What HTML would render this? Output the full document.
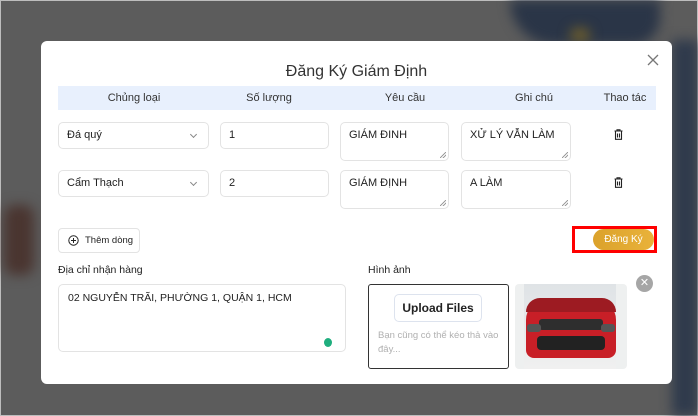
<!DOCTYPE html>
<html><head><meta charset="utf-8"><style>
*{box-sizing:border-box;margin:0;padding:0}
body{width:698px;height:416px;overflow:hidden;background:#5c5c5c;font-family:"Liberation Sans","Noto Sans CJK SC",sans-serif;position:relative;color:#222}
.frame{position:absolute;left:0;top:0;width:698px;height:416px;border:1px solid #bdbdbd}
.blob{position:absolute;background:#2a3547;filter:blur(6px)}
.modal{position:absolute;left:41px;top:41px;width:631px;height:343px;background:#fff;border-radius:6px}
.abs{position:absolute}
.title{left:0;width:100%;top:22px;text-align:center;font-size:16px;color:#333}
.head{left:17px;top:45px;width:598px;height:24px;background:#e8f0fd;font-size:11px;color:#333}
.head span{position:absolute;top:6px;transform:translateX(-50%);white-space:nowrap}
.inp{position:absolute;border:1px solid #e3e3e3;border-radius:5px;font-size:11px;color:#222;padding:6px 8px}
.grip{position:absolute;right:2px;bottom:2px;width:6px;height:6px;background:linear-gradient(135deg,transparent 45%,#999 46%,#999 55%,transparent 56%,transparent 70%,#999 71%,#999 80%,transparent 81%)}
.chev{position:absolute;right:12px;top:9px;width:5px;height:5px;border-right:1px solid #888;border-bottom:1px solid #888;transform:rotate(45deg)}
</style></head><body>
<div class="frame"></div>
<div class="blob" style="left:510px;top:0;width:150px;height:45px;border-radius:0 0 30px 50px"></div>
<div class="blob" style="left:672px;top:40px;width:26px;height:376px;background:#2f3a4c"></div>
<div class="blob" style="left:570px;top:28px;width:20px;height:14px;background:#6e5e2c;border-radius:8px"></div>
<div class="blob" style="left:4px;top:205px;width:30px;height:70px;background:#4a3530;border-radius:10px"></div>
<div class="modal">
 <div class="abs title">Đăng Ký Giám Định</div>
 <svg class="abs" style="left:606px;top:13px" width="12" height="12" viewBox="0 0 12 12"><path d="M1 1L11 11M11 1L1 11" stroke="#777" stroke-width="1.3"/></svg>
 <div class="abs head"><span style="left:76px">Chủng loại</span><span style="left:211px">Số lượng</span><span style="left:347px">Yêu cầu</span><span style="left:476px">Ghi chú</span><span style="left:567px">Thao tác</span></div>

 <div class="inp" style="left:17px;top:81px;width:151px;height:27px">Đá quý<div class="chev"></div></div>
 <div class="inp" style="left:179px;top:81px;width:109px;height:27px">1</div>
 <div class="inp" style="left:299px;top:81px;width:109px;height:39px">GIÁM ĐINH<div class="grip"></div></div>
 <div class="inp" style="left:420px;top:81px;width:110px;height:39px">XỬ LÝ VẪN LÀM<div class="grip"></div></div>
 <svg class="abs" style="left:573px;top:88px" width="9" height="11" viewBox="0 0 9 11"><path d="M0.5 2H8.5M3 2V0.8H6V2M1.5 2.5V10.3H7.5V2.5M3.5 4.5V8.5M5.5 4.5V8.5" stroke="#222" stroke-width="1.1" fill="none"/></svg>

 <div class="inp" style="left:17px;top:129px;width:151px;height:27px">Cẩm Thạch<div class="chev"></div></div>
 <div class="inp" style="left:179px;top:129px;width:109px;height:27px">2</div>
 <div class="inp" style="left:299px;top:129px;width:109px;height:39px">GIÁM ĐỊNH<div class="grip"></div></div>
 <div class="inp" style="left:420px;top:129px;width:110px;height:39px">A LÀM<div class="grip"></div></div>
 <svg class="abs" style="left:573px;top:136px" width="9" height="11" viewBox="0 0 9 11"><path d="M0.5 2H8.5M3 2V0.8H6V2M1.5 2.5V10.3H7.5V2.5M3.5 4.5V8.5M5.5 4.5V8.5" stroke="#222" stroke-width="1.1" fill="none"/></svg>

 <div class="abs" style="left:17px;top:187px;width:82px;height:25px;border:1px solid #e3e3e3;border-radius:4px;font-size:9.5px;padding:6px 0 0 26px;white-space:nowrap">Thêm dòng</div>
 <svg class="abs" style="left:27px;top:194px" width="11" height="11" viewBox="0 0 11 11"><circle cx="5.5" cy="5.5" r="4.7" stroke="#222" fill="none" stroke-width="1"/><path d="M5.5 3V8M3 5.5H8" stroke="#222" stroke-width="1"/></svg>

 <div class="abs" style="left:531px;top:185px;width:85px;height:27px;border:3px solid #f00"></div>
 <div class="abs" style="left:552px;top:188px;width:61px;height:21px;border-radius:11px;background:linear-gradient(90deg,#dba22b,#e9b23a);color:#fff;font-size:10px;text-align:center;line-height:21px">Đăng Ký</div>

 <div class="abs" style="left:17px;top:223px;font-size:10.5px;color:#222">Địa chỉ nhận hàng</div>
 <div class="inp" style="left:17px;top:243px;width:288px;height:68px;padding:7px 9px;font-size:10.5px">02 NGUYỄN TRÃI, PHƯỜNG 1, QUẬN 1, HCM</div>
 <div class="abs" style="left:283px;top:297px;width:8px;height:9px;border-radius:50%;background:#1fae7e"></div>

 <div class="abs" style="left:327px;top:223px;font-size:10.5px;color:#222">Hình ảnh</div>
 <div class="abs" style="left:327px;top:243px;width:141px;height:85px;border:1.5px solid #333;border-radius:3px"></div>
 <div class="abs" style="left:353px;top:253px;width:88px;height:28px;border:1px solid #dde3ee;border-radius:5px;font-size:12px;font-weight:bold;text-align:center;line-height:27px">Upload Files</div>
 <div class="abs" style="left:337px;top:288px;width:128px;font-size:9.5px;line-height:14px;color:#b0b0b0">Bạn cũng có thể kéo thả vào đây...</div>
 <div class="abs" style="left:474px;top:243px;width:112px;height:85px;background:#eef0f0;border-radius:4px;overflow:hidden">
  <div class="abs" style="left:9px;top:0;width:92px;height:85px;background:linear-gradient(#dfe3e6,#f0f0f0)"></div>
  <div class="abs" style="left:11px;top:14px;width:90px;height:60px;background:#c81f27;border-radius:22px 22px 8px 8px"></div>
  <div class="abs" style="left:11px;top:14px;width:90px;height:14px;background:#9d1b22;border-radius:22px 22px 0 0"></div>
  <div class="abs" style="left:24px;top:35px;width:64px;height:11px;background:#2e2e2e;border-radius:3px"></div>
  <div class="abs" style="left:22px;top:52px;width:68px;height:14px;background:#222;border-radius:4px"></div>
  <div class="abs" style="left:12px;top:40px;width:14px;height:8px;background:#555;border-radius:3px"></div>
  <div class="abs" style="left:86px;top:40px;width:14px;height:8px;background:#555;border-radius:3px"></div>
 </div>
 <div class="abs" style="left:595px;top:234px;width:17px;height:17px;border-radius:50%;background:#a6a6a6;color:#fff;font-size:11px;text-align:center;line-height:17px">✕</div>
</div>
</body></html>
